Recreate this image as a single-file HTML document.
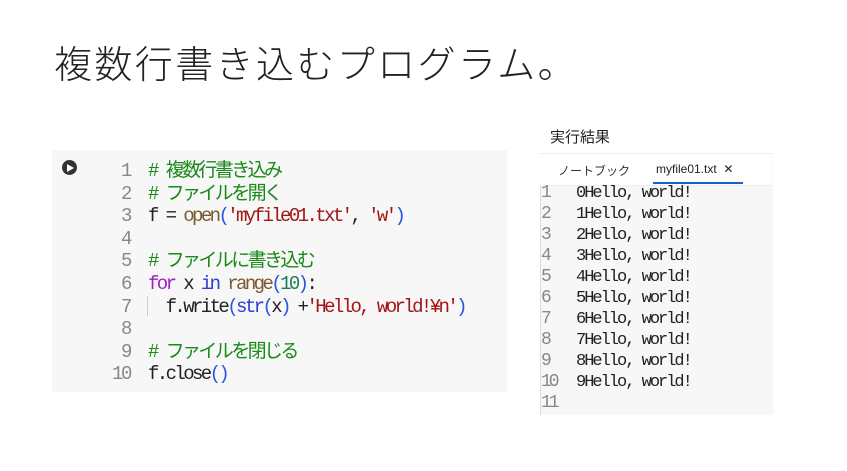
<!DOCTYPE html>
<html><head><meta charset="utf-8"><style>
body{margin:0;width:847px;height:471px;background:#fff;position:relative;overflow:hidden;font-family:"Liberation Sans","Noto Sans CJK JP",sans-serif}
.t{position:absolute;left:54px;top:34px;font-size:38px;letter-spacing:2.4px;color:#222;white-space:nowrap;font-weight:300}
.code{position:absolute;left:52px;top:150px;width:455px;height:242px;background:#f7f7f7}
.run{position:absolute;left:62px;top:160px;width:15px;height:15px;border-radius:50%;background:#333}
.run:after{content:"";position:absolute;left:5px;top:3.5px;border-left:7px solid #fff;border-top:4px solid transparent;border-bottom:4px solid transparent}
.ln{position:absolute;font-family:"Liberation Mono","Noto Sans CJK JP",monospace;white-space:pre;color:#222}
.num{color:#888;text-align:right}
.cm{color:#1a8a1a}.kw{color:#a020c0}.bi{color:#2a3fd0}.fn{color:#7a5a30}.st{color:#a31515}.br{color:#2a55e0}
.res{position:absolute;left:540px;top:153px;width:232px;height:262px;background:#f7f7f7;border-left:1px solid #ddd}
.tab{position:absolute;left:540px;top:153px;width:232px;height:31px;background:#fff;border-top:1px solid #eee;border-bottom:1px solid #eee}
</style></head><body>
<div class="t">複数行書き込むプログラム。</div>
<div class="code"></div><div class="run"></div>
<div class="ln num" style="left:100px;top:160px;font-size:19px;line-height:22.6px;letter-spacing:-2.4px;width:30px">1
2
3
4
5
6
7
8
9
10</div>
<div class="ln" style="left:148px;top:160px;font-size:19px;line-height:22.6px;letter-spacing:-2.6px"><span class="cm"># 複数行書き込み</span>
<span class="cm"># ファイルを開く</span>
f = <span class="fn">open</span><span class="br">(</span><span class="st">'myfile01.txt'</span>, <span class="st">'w'</span><span class="br">)</span>

<span class="cm"># ファイルに書き込む</span>
<span class="kw">for</span> x <span class="bi">in</span> <span class="fn">range</span><span class="br">(</span><span style="color:#1a7a5a">10</span><span class="br">)</span>:
  f.write<span class="br">(</span><span class="bi">str</span><span class="br">(</span>x<span class="br">)</span> +<span class="st">'Hello, world!¥n'</span><span class="br">)</span>

<span class="cm"># ファイルを閉じる</span>
f.close<span class="br">()</span></div>
<div style="position:absolute;left:147px;top:296px;width:1px;height:20px;background:#ccc"></div>
<div style="position:absolute;left:550px;top:126px;font-size:15px;color:#222">実行結果</div>
<div class="res"></div><div class="tab"></div>
<div style="position:absolute;left:558px;top:162px;font-size:12px;color:#333">ノートブック</div>
<div style="position:absolute;left:656px;top:162px;font-size:12px;color:#222">myfile01.txt &nbsp;✕</div>
<div style="position:absolute;left:653px;top:182px;width:90px;height:2px;background:#1a5fd0"></div>
<div class="ln num" style="left:539px;top:183px;font-size:18px;line-height:21px;letter-spacing:-3px;width:20px;text-align:left;padding-left:2px">1
2
3
4
5
6
7
8
9
10
11</div>
<div class="ln" style="left:576px;top:183px;font-size:17px;line-height:21px;letter-spacing:-2px">0Hello, world!
1Hello, world!
2Hello, world!
3Hello, world!
4Hello, world!
5Hello, world!
6Hello, world!
7Hello, world!
8Hello, world!
9Hello, world!</div>
</body></html>
